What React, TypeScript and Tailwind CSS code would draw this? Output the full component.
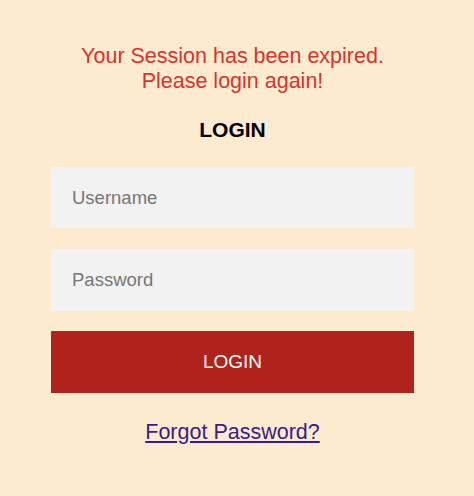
export default function App() {
  return (
    <div className="w-[474px] h-[496px] bg-[#fdebd0] overflow-hidden" style={{ fontFamily: '"Liberation Sans", Arial, sans-serif' }}>
      <div className="ml-[51px] w-[363px] flex flex-col pt-[44px]">
        <p className="text-center text-[21.5px] leading-[25px] text-[#d9342b] whitespace-nowrap">
          Your Session has been expired.
          <br />
          Please login again!
        </p>
        <h1 className="mt-[24px] text-center text-[21px] leading-[24px] font-bold text-black">LOGIN</h1>
        <input
          type="text"
          placeholder="Username"
          className="mt-[25px] h-[61px] w-full bg-[#f2f2f2] px-[21px] text-[18.5px] text-[#333] placeholder:text-[#767676] outline-none"
        />
        <input
          type="password"
          placeholder="Password"
          className="mt-[21px] h-[62px] w-full bg-[#f2f2f2] px-[21px] text-[18.5px] text-[#333] placeholder:text-[#767676] outline-none"
        />
        <button className="mt-[20px] h-[62px] w-full bg-[#b0231a] text-white text-[19px]">LOGIN</button>
        <div className="mt-[25px] text-center">
          <a href="#" className="text-[21.5px] leading-[28px] text-[#3a1c86] underline">Forgot Password?</a>
        </div>
      </div>
    </div>
  );
}
